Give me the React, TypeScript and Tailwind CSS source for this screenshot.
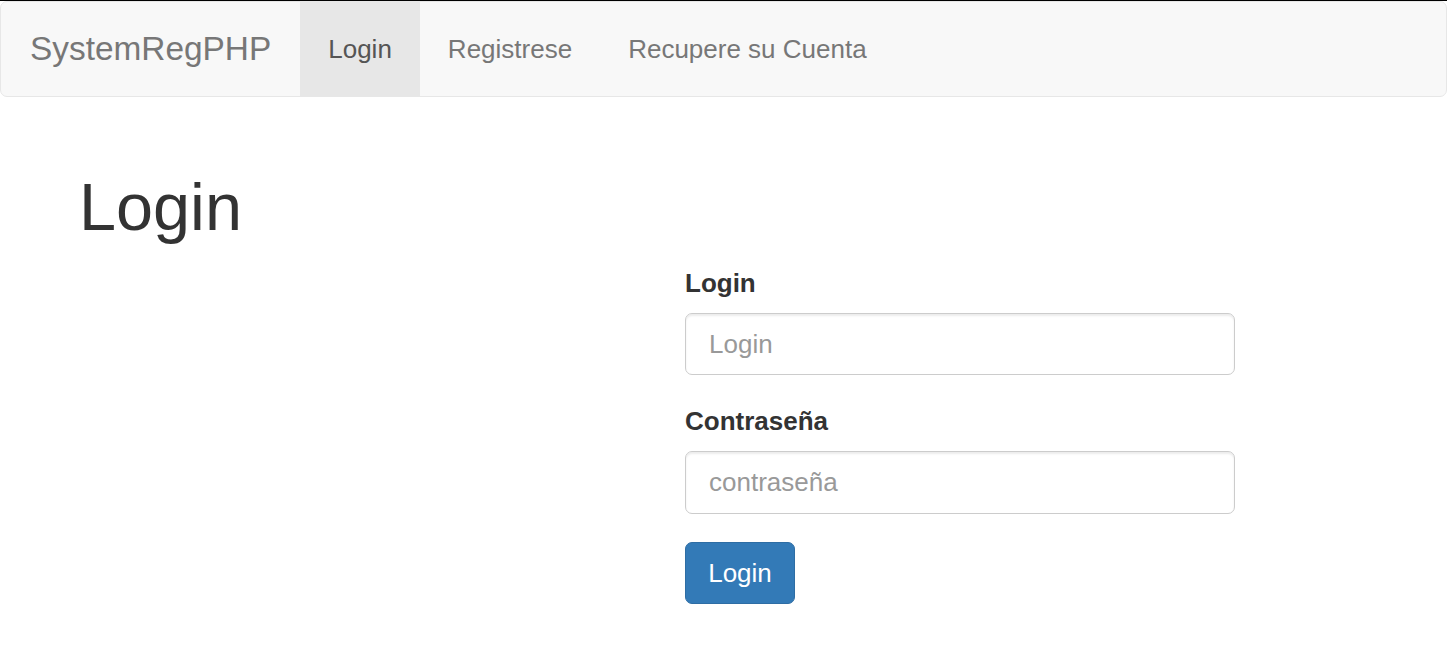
export default function App() {
  const font = { fontFamily: '"Liberation Sans", Arial, sans-serif' };
  return (
    <div className="min-h-screen bg-white text-[#333]" style={font}>
      <div className="h-px bg-black" />
      <nav className="flex h-[96px] items-stretch rounded-[7px] border border-[#e7e7e7] bg-[#f8f8f8]">
        <a className="flex items-center pl-[29px] pr-[29px] text-[33.4px] text-[#777]">SystemRegPHP</a>
        <ul className="flex items-stretch">
          <li className="flex items-center bg-[#e7e7e7] px-[28px] text-[26px] text-[#555]">Login</li>
          <li className="flex items-center px-[28px] text-[26px] text-[#777]">Registrese</li>
          <li className="flex items-center px-[28px] text-[26px] text-[#777]">Recupere su Cuenta</li>
        </ul>
      </nav>

      <main className="px-[75px] pt-[74px]">
        <h1 className="mb-[21px] pl-[4px] text-[66.6px] leading-[1.1] font-normal text-[#333]">Login</h1>
        <div className="grid grid-cols-[610px_550px]">
          <div />
          <form className="flex flex-col">
            <div className="mb-[28px]">
              <label className="mb-[11px] block text-[26px] leading-[37px] font-bold text-[#333]">Login</label>
              <input
                type="text"
                placeholder="Login"
                className="block h-[62px] w-full rounded-[7px] border border-[#ccc] px-[23px] text-[26px] text-[#555] shadow-[inset_0_2px_2px_rgba(0,0,0,0.075)] outline-none placeholder:text-[#999]"
              />
            </div>
            <div className="mb-[28px]">
              <label className="mb-[11px] block text-[26px] leading-[37px] font-bold text-[#333]">Contraseña</label>
              <input
                type="password"
                placeholder="contraseña"
                className="block h-[63px] w-full rounded-[7px] border border-[#ccc] px-[23px] text-[26px] text-[#555] shadow-[inset_0_2px_2px_rgba(0,0,0,0.075)] outline-none placeholder:text-[#999]"
              />
            </div>
            <div>
              <button
                type="button"
                className="h-[62px] w-[110px] rounded-[7px] border border-[#2e6da4] bg-[#337ab7] text-[26px] text-white"
              >
                Login
              </button>
            </div>
          </form>
        </div>
      </main>
    </div>
  );
}
